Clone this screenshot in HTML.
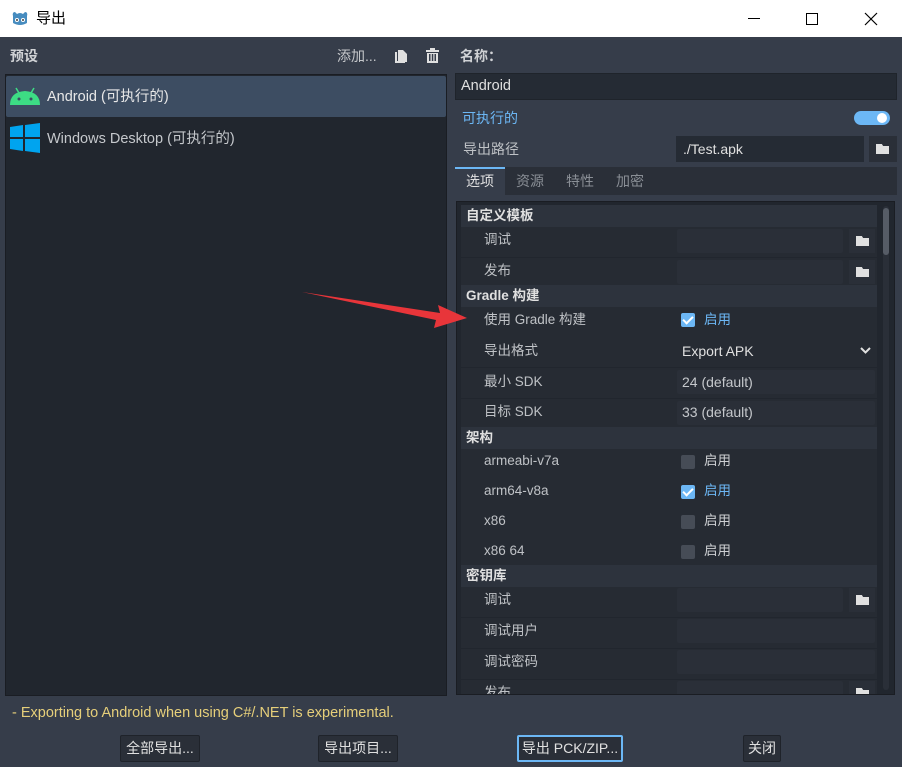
<!DOCTYPE html>
<html><head><meta charset="utf-8"><style>
*{box-sizing:border-box;margin:0;padding:0}
body{width:902px;height:767px;overflow:hidden;background:#363d4a;font-family:"Liberation Sans","Noto Sans CJK SC",sans-serif;font-size:14px;color:#cdcfd2;position:relative}
.a{position:absolute}
.t{position:absolute;white-space:nowrap;line-height:20px}
.sec{position:absolute;left:461px;width:416px;height:22px;background:#2d333d;font-weight:bold;color:#e0e0e0;padding-left:5px;line-height:22px;font-size:13.5px}
.row{position:absolute;left:461px;width:416px;height:30px;background:#262b33}
.lbl{position:absolute;left:484px;color:#bfc2c6;line-height:20px;font-size:13.5px}
.fld{position:absolute;background:#2a2f38;border-radius:2px}
.fb{position:absolute;background:#2a2f38;width:26px;height:24px}
.fold{position:absolute;left:7px;top:7px;width:13px;height:10px;background:#e0e0e0;clip-path:polygon(0 0,45% 0,55% 20%,100% 20%,100% 100%,0 100%)}
.cb{position:absolute;left:681px;width:14px;height:14px;border-radius:2px;background:#464c56}
.cb.on{background:#6cb7f5}
.cb.on:after{content:"";position:absolute;left:4px;top:1px;width:4px;height:8px;border:solid #fff;border-width:0 2px 2px 0;transform:rotate(45deg)}
.en{position:absolute;left:704px;line-height:20px;font-size:13.5px}
.btn{position:absolute;top:735px;height:27px;background:#2a2f38;border:1px solid #1f232a;border-radius:2px;color:#e0e0e0;text-align:center;line-height:25px;font-size:14px}
</style></head><body>
<div class="a" style="left:0;top:0;width:902px;height:37px;background:#fff"></div>
<svg class="a" style="left:11px;top:10px" width="18" height="17" viewBox="0 0 18 17"><path d="M2 6 Q1 2 4 2 L6 4 Q9 2 12 4 L14 2 Q17 2 16 6 L16 13 Q9 17 2 13Z" fill="#478cbf"/><circle cx="6" cy="10" r="2" fill="#fff"/><circle cx="12" cy="10" r="2" fill="#fff"/><circle cx="6" cy="10" r="1" fill="#414042"/><circle cx="12" cy="10" r="1" fill="#414042"/></svg>
<div class="t" style="left:36px;top:9px;color:#000;font-size:15px">导出</div>
<div class="a" style="left:748px;top:18px;width:12px;height:1px;background:#000"></div>
<div class="a" style="left:806px;top:13px;width:12px;height:12px;border:1px solid #000"></div>
<svg class="a" style="left:864px;top:12px" width="14" height="14" viewBox="0 0 14 14"><path d="M1 1L13 13M13 1L1 13" stroke="#000" stroke-width="1.2"/></svg>

<div class="t" style="left:10px;top:46px;font-weight:bold;color:#d0d2d5">预设</div>
<div class="t" style="left:337px;top:46px;color:#c5c7ca">添加...</div>
<svg class="a" style="left:394px;top:48px" width="14" height="15" viewBox="0 0 14 15"><path d="M4 2h5l4 4v8H4z" fill="#e0e0e0"/><path d="M1 4h2v9h8v2H1z" fill="#e0e0e0"/></svg>
<svg class="a" style="left:425px;top:48px" width="15" height="15" viewBox="0 0 15 15"><rect x="1" y="2" width="13" height="2" fill="#e0e0e0"/><rect x="5" y="0" width="5" height="2" fill="#e0e0e0"/><path d="M2 5h11v10H2z M4 6v7h1.5V6z M6.8 6v7h1.5V6z M9.5 6v7H11V6z" fill="#e0e0e0" fill-rule="evenodd"/></svg>

<div class="a" style="left:5px;top:74px;width:442px;height:622px;background:#21262e;border:1px solid #1a1d23"></div>
<div class="a" style="left:6px;top:76px;width:440px;height:41px;background:#3d4d62;border-radius:2px"></div>
<svg class="a" style="left:9px;top:86px" width="32" height="20" viewBox="0 0 32 20"><path d="M1 19 Q1 6 16 5 Q31 6 31 19Z" fill="#3ddc84"/><line x1="7" y1="2" x2="10" y2="7" stroke="#3ddc84" stroke-width="1.5"/><line x1="25" y1="2" x2="22" y2="7" stroke="#3ddc84" stroke-width="1.5"/><circle cx="10" cy="13" r="1.5" fill="#3d4d62"/><circle cx="22" cy="13" r="1.5" fill="#3d4d62"/></svg>
<div class="t" style="left:47px;top:87px;color:#e8e8e8;font-size:14.5px">Android (可执行的)</div>
<svg class="a" style="left:10px;top:123px" width="30" height="30" viewBox="0 0 30 30"><path d="M0 4L13 2V14H0z M15 2L30 0V14H15z M0 16H13V28L0 26z M15 16H30V30L15 28z" fill="#00a4ef"/></svg>
<div class="t" style="left:47px;top:129px;color:#c5c8cc;font-size:14.5px">Windows Desktop (可执行的)</div>

<div class="t" style="left:460px;top:46px;font-weight:bold;color:#d0d2d5">名称：</div>
<div class="a" style="left:455px;top:73px;width:442px;height:27px;background:#252b34;border:1px solid #1f242b"></div>
<div class="t" style="left:461px;top:76px;color:#e0e0e0;font-size:14.5px">Android</div>
<div class="t" style="left:462px;top:108px;color:#6cb7f5">可执行的</div>
<div class="a" style="left:854px;top:111px;width:36px;height:14px;border-radius:7px;background:#6cb7f5"></div>
<div class="a" style="left:877px;top:113px;width:10px;height:10px;border-radius:5px;background:#fff"></div>
<div class="t" style="left:463px;top:139px;color:#bfc2c6">导出路径</div>
<div class="a" style="left:676px;top:136px;width:188px;height:26px;background:#252b34"></div>
<div class="t" style="left:683px;top:139px;color:#e0e0e0">./Test.apk</div>
<div class="a" style="left:869px;top:136px;width:28px;height:26px;background:#2a2f38"><div class="fold" style="left:7px;top:8px"></div></div>

<div class="a" style="left:455px;top:167px;width:442px;height:28px;background:#2a2f38"></div>
<div class="a" style="left:455px;top:167px;width:50px;height:28px;background:#363d4a;border-top:2px solid #6cb7f5"></div>
<div class="t" style="left:466px;top:171px;color:#e0e0e0">选项</div>
<div class="t" style="left:516px;top:171px;color:#8a8f96">资源</div>
<div class="t" style="left:566px;top:171px;color:#8a8f96">特性</div>
<div class="t" style="left:616px;top:171px;color:#8a8f96">加密</div>
<div class="a" style="left:455px;top:195px;width:442px;height:501px;background:#363d4a"></div>
<div class="a" style="left:456px;top:201px;width:439px;height:494px;background:#21262e;border:1px solid #1a1d23;overflow:hidden">
</div>
<div class="a" style="left:883px;top:206px;width:6px;height:484px;background:#2a2f38;border-radius:3px"></div>
<div class="a" style="left:883px;top:208px;width:6px;height:47px;background:#565c66;border-radius:3px"></div>

<div class="sec" style="top:205px">自定义模板</div>
<div class="row" style="top:227px"></div><div class="lbl" style="top:230px">调试</div>
<div class="fld" style="left:677px;top:229px;width:166px;height:24px"></div><div class="fb" style="left:849px;top:229px"><div class="fold"></div></div>
<div class="row" style="top:258px"></div><div class="lbl" style="top:261px">发布</div>
<div class="fld" style="left:677px;top:260px;width:166px;height:24px"></div><div class="fb" style="left:849px;top:260px"><div class="fold"></div></div>
<div class="sec" style="top:285px">Gradle 构建</div>
<div class="row" style="top:307px"></div><div class="lbl" style="top:310px">使用 Gradle 构建</div>
<div class="cb on" style="top:313px"></div><div class="en" style="top:310px;color:#6cb7f5">启用</div>
<div class="row" style="top:337px"></div><div class="lbl" style="top:341px">导出格式</div>
<div class="t" style="left:682px;top:341px;color:#e0e0e0">Export APK</div>
<svg class="a" style="left:860px;top:347px" width="11" height="7" viewBox="0 0 11 7"><path d="M1 1l4.5 4.5L10 1" stroke="#e0e0e0" stroke-width="2" fill="none"/></svg>
<div class="row" style="top:368px"></div><div class="lbl" style="top:372px">最小 SDK</div>
<div class="fld" style="left:677px;top:370px;width:198px;height:24px"></div><div class="t" style="left:682px;top:372px;color:#c5c8cc">24 (default)</div>
<div class="row" style="top:399px"></div><div class="lbl" style="top:402px">目标 SDK</div>
<div class="fld" style="left:677px;top:401px;width:198px;height:24px"></div><div class="t" style="left:682px;top:402px;color:#c5c8cc">33 (default)</div>
<div class="sec" style="top:427px">架构</div>
<div class="row" style="top:449px"></div><div class="lbl" style="top:451px">armeabi-v7a</div><div class="cb" style="top:455px"></div><div class="en" style="top:451px">启用</div>
<div class="row" style="top:479px"></div><div class="lbl" style="top:481px">arm64-v8a</div><div class="cb on" style="top:485px"></div><div class="en" style="top:481px;color:#6cb7f5">启用</div>
<div class="row" style="top:509px"></div><div class="lbl" style="top:511px">x86</div><div class="cb" style="top:515px"></div><div class="en" style="top:511px">启用</div>
<div class="row" style="top:539px"></div><div class="lbl" style="top:541px">x86 64</div><div class="cb" style="top:545px"></div><div class="en" style="top:541px">启用</div>
<div class="sec" style="top:565px">密钥库</div>
<div class="row" style="top:587px"></div><div class="lbl" style="top:590px">调试</div>
<div class="fld" style="left:677px;top:588px;width:166px;height:24px"></div><div class="fb" style="left:849px;top:588px"><div class="fold"></div></div>
<div class="row" style="top:618px"></div><div class="lbl" style="top:621px">调试用户</div>
<div class="fld" style="left:677px;top:619px;width:198px;height:24px"></div>
<div class="row" style="top:649px"></div><div class="lbl" style="top:652px">调试密码</div>
<div class="fld" style="left:677px;top:650px;width:198px;height:24px"></div>
<div class="a" style="left:461px;top:680px;width:416px;height:14px;overflow:hidden;background:#262b33">
 <div class="lbl" style="left:23px;top:3px">发布</div>
 <div class="fld" style="left:216px;top:1px;width:166px;height:24px"></div>
 <div class="fb" style="left:388px;top:1px"><div class="fold"></div></div>
</div>

<svg class="a" style="left:0;top:0" width="902" height="767"><path d="M302 292 L440 313 L438 305 L467 318 L434 328 L436 320Z" fill="#e8353a"/></svg>

<div class="t" style="left:12px;top:703px;color:#e6cf7a;font-size:14.5px">- Exporting to Android when using C#/.NET is experimental.</div>
<div class="btn" style="left:120px;width:80px">全部导出...</div>
<div class="btn" style="left:318px;width:80px">导出项目...</div>
<div class="btn" style="left:517px;width:106px;border:2px solid #6cb7f5;line-height:23px">导出 PCK/ZIP...</div>
<div class="btn" style="left:743px;width:38px">关闭</div>
</body></html>
